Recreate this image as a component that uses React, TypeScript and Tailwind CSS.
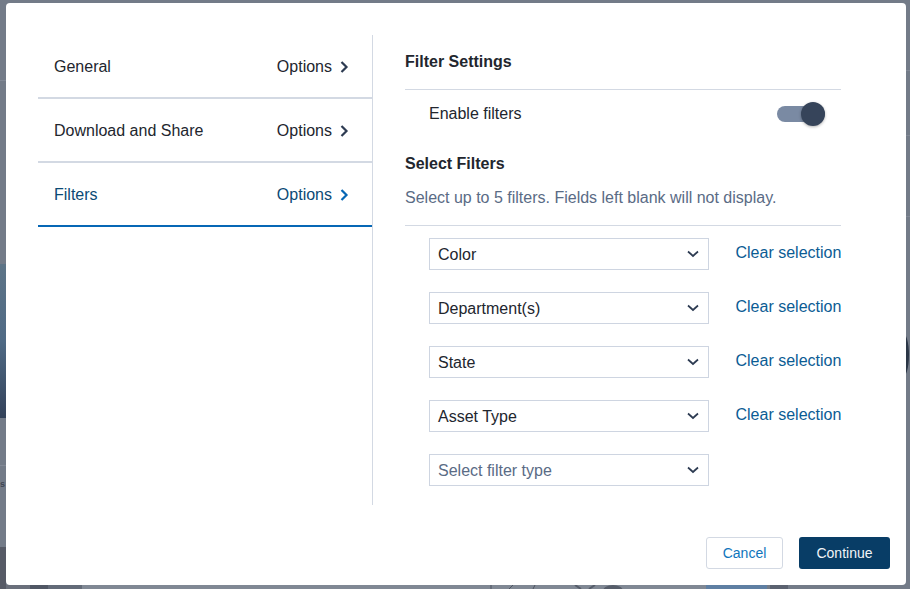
import React from "react";

function Chevron({ color = "#2d3b52" }: { color?: string }) {
  return (
    <svg width="10" height="14" viewBox="0 0 10 14" fill="none" className="ml-[7px]">
      <path d="M2.5 2l5 5-5 5" stroke={color} strokeWidth="2.2" />
    </svg>
  );
}

function Row({ label, active }: { label: string; active?: boolean }) {
  return (
    <div
      className={`flex h-[64px] items-center justify-between border-b-2 pl-[16px] pr-[23px] pt-[2px] ${
        active ? "border-[#0767b5] text-[#0b4a75]" : "border-[#d3d9e3] text-[#22262e]"
      }`}
    >
      <span>{label}</span>
      <span className="flex items-center">
        Options
        <Chevron color={active ? "#0767b5" : "#2d3b52"} />
      </span>
    </div>
  );
}

function Select({ value, placeholder, clear }: { value: string; placeholder?: boolean; clear?: boolean }) {
  return (
    <div className="flex h-[32px] items-start">
      <div
        className={`flex h-[32px] w-[280px] shrink-0 items-center justify-between border border-[#ced5e1] pl-[8px] pr-[9px] ${
          placeholder ? "text-[#5a6b85]" : "text-[#22262e]"
        }`}
      >
        <span className="pt-[2px]">{value}</span>
        <svg width="12" height="8" viewBox="0 0 12 8" fill="none">
          <path d="M1 1.5l5 4.5 5-4.5" stroke="#2d3b52" strokeWidth="1.7" />
        </svg>
      </div>
      {clear && <span className="ml-[26.5px] whitespace-nowrap leading-[30px] text-[#0b5c94]">Clear selection</span>}
    </div>
  );
}

export default function App() {
  return (
    <div className="relative h-[589px] w-[910px] overflow-hidden bg-[#737b88] font-['Liberation_Sans',sans-serif] text-[16px]">
      {/* dimmed page behind the dialog */}
      <div className="absolute left-0 top-[264px] h-[154px] w-[6px] bg-gradient-to-b from-[#5d7487] via-[#4f6a85] to-[#33425a]" />
      <div className="absolute left-0 top-[547px] h-[42px] w-[6px] bg-[#565a66]" />
      <div className="absolute left-0 top-[80px] h-px w-[6px] bg-[#828996]" />
      <div className="absolute left-0 top-[465px] h-px w-[6px] bg-[#828996]" />
      <span className="absolute left-0 top-[478px] text-[9px] font-bold leading-[12px] text-[#3e4552]">s</span>
      <div className="absolute right-0 top-[70px] h-px w-[4px] bg-[#828996]" />
      <div className="absolute right-0 top-[135px] h-px w-[4px] bg-[#828996]" />
      <div className="absolute right-0 top-[216px] h-px w-[4px] bg-[#828996]" />
      <div className="absolute right-[1px] top-[332px] h-[46px] w-[14px] rounded-[50%] border-r-[3px] border-[#2b3646]" />
      <div className="absolute bottom-0 left-[82px] h-[4px] w-[630px] bg-[#808894]" />
      <div className="absolute bottom-0 left-[6px] h-[4px] w-[24px] bg-[#6a6f7b]" />
      <div className="absolute bottom-0 left-[30px] h-[4px] w-[18px] bg-[#505764]" />
      <div className="absolute bottom-0 left-[48px] h-[4px] w-[34px] bg-[#636b78]" />
      <div className="absolute bottom-0 left-[706px] h-[4px] w-[61px] bg-[#5f7fa3]" />
      <div className="absolute bottom-0 left-[770px] h-[4px] w-[18px] bg-[#5b6270]" />
      <svg className="absolute bottom-0 left-[480px]" width="150" height="4" viewBox="0 0 150 4" fill="none">
        <path d="M11 0v4M29 4l4-4M55 0l-2 4" stroke="#4c5360" strokeWidth="1" />
        <path d="M95 0l6 4M115 0l-6 4" stroke="#565d6a" strokeWidth="2" />
        <ellipse cx="133" cy="6" rx="10" ry="6" fill="#565d6a" />
      </svg>

      {/* dialog */}
      <div className="absolute left-[6px] top-[3px] flex h-[582px] w-[900px] flex-col rounded-[4px] bg-white">
        <div className="flex pl-[32px] pt-[32px]">
          <div className="h-[470px] w-[335px] border-r border-[#d3d9e3]">
            <Row label="General" />
            <Row label="Download and Share" />
            <Row label="Filters" active />
          </div>
          <div className="ml-[32px] w-[436px] text-[#22262e]">
            <h2 className="h-[55px] border-b border-[#d3d9e3] pt-[17px] font-bold leading-[20px]">Filter Settings</h2>
            <div className="flex h-[47px] items-center justify-between pl-[24px] pr-[16px]">
              <span>Enable filters</span>
              <span className="relative block h-[16px] w-[48px] rounded-full bg-[#7a8aa3]">
                <span className="absolute right-0 top-[-4px] h-[24px] w-[24px] rounded-full bg-[#36445a] shadow-[0_1px_3px_rgba(0,0,0,0.3)]" />
              </span>
            </div>
            <h3 className="mt-[17px] font-bold leading-[20px]">Select Filters</h3>
            <p className="mt-[14px] h-[38px] border-b border-[#d3d9e3] leading-[20px] text-[#5a6b85]">
              Select up to 5 filters. Fields left blank will not display.
            </p>
            <div className="mt-[12px] flex flex-col gap-[22px] pl-[24px]">
              <Select value="Color" clear />
              <Select value="Department(s)" clear />
              <Select value="State" clear />
              <Select value="Asset Type" clear />
              <Select value="Select filter type" placeholder />
            </div>
          </div>
        </div>
        <div className="mt-[32px] flex justify-end gap-[16px] pr-[16px] text-[14px]">
          <button className="h-[32px] w-[77px] rounded-[3px] border border-[#d3d9e3] bg-white text-[#0f75bc]">Cancel</button>
          <button className="h-[32px] w-[91px] rounded-[3px] bg-[#083d66] text-[#f2f5f8]">Continue</button>
        </div>
      </div>
    </div>
  );
}
